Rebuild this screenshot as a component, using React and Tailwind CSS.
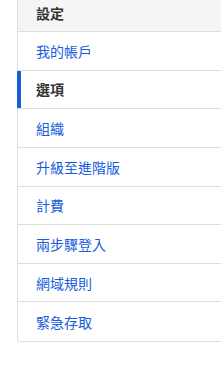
const items = [
    { label: '我的帳戶' },
    { label: '選項', active: true },
    { label: '組織' },
    { label: '升級至進階版' },
    { label: '計費' },
    { label: '兩步驟登入' },
    { label: '網域規則' },
    { label: '緊急存取' },
];

export default function App() {
    return (
        <div
            className="min-h-[366px] bg-white pl-[17px]"
            style={{ fontFamily: '"Noto Sans CJK TC", "Noto Sans", sans-serif' }}
        >
            <div className="border-l border-b border-[#dedede] rounded-bl-[3px]">
                {/* Header */}
                <div className="h-[32px] bg-[#f5f5f5] border-b border-[#dedede] pl-[18px] pt-[3px] text-[14px] leading-[20px] font-bold text-[#333]">
                    設定
                </div>

                {/* Menu items */}
                {items.map((item, i) => (
                    <div
                        key={item.label}
                        className={
                            'relative flex h-[38.625px] items-center pl-[18px] text-[14px] leading-[20px] ' +
                            (i < items.length - 1 ? 'border-b border-[#dedede] ' : '') +
                            (item.active
                                ? 'font-bold text-[#333]'
                                : 'text-[#175ddc]')
                        }
                    >
                        {item.active && (
                            <span className="absolute left-[-1px] top-0 bottom-0 w-[4px] bg-[#175ddc]" />
                        )}
                        {item.label}
                    </div>
                ))}
            </div>
        </div>
    );
}
